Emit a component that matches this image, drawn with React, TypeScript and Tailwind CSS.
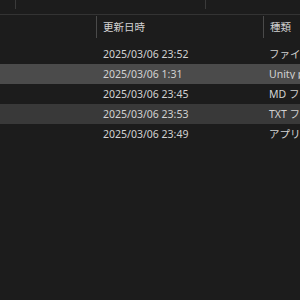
const rows = [
  { date: "2025/03/06 23:52", type: "ファイル フォルダー", bg: "" },
  { date: "2025/03/06 1:31", type: "Unity project file", bg: "bg-[#4b4b4b]" },
  { date: "2025/03/06 23:45", type: "MD ファイル", bg: "" },
  { date: "2025/03/06 23:53", type: "TXT ファイル", bg: "bg-[#393939]" },
  { date: "2025/03/06 23:49", type: "アプリケーション", bg: "" },
];

export default function App() {
  return (
    <div
      className="w-[300px] h-[300px] overflow-hidden bg-[#1c1c1c] text-[#d2d2d2] text-[10.5px] leading-none"
      style={{ fontFamily: '"Noto Sans", "Noto Sans CJK JP", sans-serif' }}
    >
      {/* ツールバーの下端 */}
      <div className="flex h-[15px] border-b border-[#333333]">
        <div className="w-[15px]" />
        <div className="w-[190px] h-[9px] border-l border-[#3a3a3a]" />
        <div className="flex-1 h-[9px] border-l border-[#3a3a3a]" />
      </div>

      {/* 列ヘッダー */}
      <div className="flex h-[22px] mt-[1px] whitespace-nowrap">
        <div className="w-[96px]" />
        <div className="w-[167px] border-l border-[#4a4a4a] flex items-center pl-[6px]">
          更新日時
        </div>
        <div className="flex-1 border-l border-[#4a4a4a] flex items-center pl-[6px]">
          種類
        </div>
      </div>

      {/* ファイル一覧 */}
      <div className="mt-[6px] flex flex-col">
        {rows.map((r) => (
          <div key={r.date} className={`flex h-[20px] items-center whitespace-nowrap ${r.bg}`}>
            <div className="w-[97px]" />
            <div className="w-[167px] pl-[6px]">{r.date}</div>
            <div className="flex-1 pl-[5px] overflow-hidden">{r.type}</div>
          </div>
        ))}
      </div>
    </div>
  );
}
